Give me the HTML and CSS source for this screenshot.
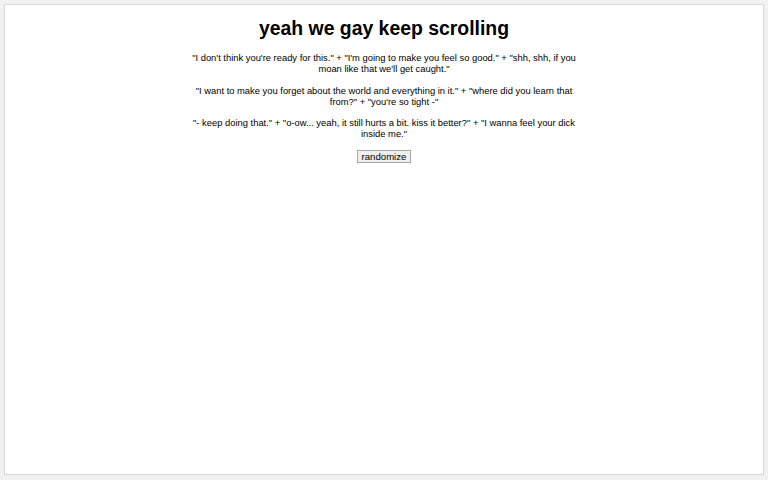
FILE: index.html
```html
<!DOCTYPE html>
<html>
<head>
<meta charset="utf-8">
<link rel="stylesheet" href="styles.css">
</head>
<body>
<main class="page">
  <h1 class="title">yeah we gay keep scrolling</h1>
  <div class="lines">
    <p>"I don't think you're ready for this." + "I'm going to make you feel so good." + "shh, shh, if you moan like that we'll get caught."</p>
    <p>"I want to make you forget about the world and everything in it." + "where did you learn that from?" + "you're so tight -"</p>
    <p>"- keep doing that." + "o-ow... yeah, it still hurts a bit. kiss it better?" + "I wanna feel your dick inside me."</p>
  </div>
  <button class="shuffle" type="button">randomize</button>
</main>
</body>
</html>
```

FILE: styles.css
```css
html, body {
  margin: 0;
  height: 100%;
}

body {
  background: #f1f1f1;
  padding: 4px 4px 5px 4px;
  box-sizing: border-box;
  font-family: "Liberation Sans", Arial, sans-serif;
  color: #000;
}

.page {
  height: 100%;
  box-sizing: border-box;
  background: #fff;
  border: 1px solid #d9d9d9;
  display: flex;
  flex-direction: column;
  align-items: center;
  padding-top: 12px;
}

.title {
  margin: 0 0 12px;
  font-size: 19.4px;
  font-weight: bold;
  line-height: 23px;
}

.lines {
  width: 392px;
  text-align: center;
  font-size: 9.4px;
  line-height: 11px;
}

.lines p {
  margin: 0 0 10.5px;
}

.shuffle {
  margin-top: 0.5px;
  font-family: "Liberation Sans", Arial, sans-serif;
  font-size: 9.6px;
  line-height: 11px;
  padding: 0 4px;
  background: #efefef;
  border: 1px solid #a8a8a8;
  border-radius: 0;
  color: #000;
}
```
